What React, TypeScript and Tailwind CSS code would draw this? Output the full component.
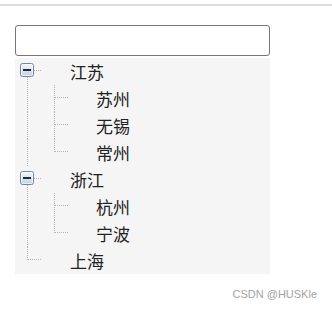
import React from "react";

type Row = { label: string; kind: "parent" | "child" | "lastChild" | "lastLeaf" };

const rows: Row[] = [
  { label: "江苏", kind: "parent" },
  { label: "苏州", kind: "child" },
  { label: "无锡", kind: "child" },
  { label: "常州", kind: "lastChild" },
  { label: "浙江", kind: "parent" },
  { label: "杭州", kind: "child" },
  { label: "宁波", kind: "lastChild" },
  { label: "上海", kind: "lastLeaf" },
];

const dot = { stroke: "#b4b4b4", strokeWidth: 1, strokeDasharray: "1 1" };

function Guides({ kind }: { kind: Row["kind"] }) {
  const isChild = kind === "child" || kind === "lastChild";
  const w = isChild ? 81 : 55;
  return (
    <svg width={w} height={27} className="shrink-0 block">
      <defs>
        <linearGradient id="boxg" x1="0" y1="0" x2="0" y2="1">
          <stop offset="0" stopColor="#f4f7fa" />
          <stop offset="1" stopColor="#c6d2df" />
        </linearGradient>
      </defs>
      {kind === "parent" && (
        <>
          <line x1={12.5} y1={19} x2={12.5} y2={27} {...dot} />
          <line x1={19} y1={12.5} x2={26} y2={12.5} {...dot} />
          <rect x={5.5} y={5.5} width={13} height={13} rx={2} fill="url(#boxg)" stroke="#7088a6" />
          <rect x={6.5} y={6.5} width={11} height={11} rx={1} fill="none" stroke="#ffffff" strokeOpacity={0.6} />
          <rect x={8} y={11} width={8} height={2} fill="#1d2b3c" />
        </>
      )}
      {isChild && (
        <>
          <line x1={12.5} y1={0} x2={12.5} y2={27} {...dot} />
          <line x1={39.5} y1={0} x2={39.5} y2={kind === "child" ? 27 : 13} {...dot} />
          <line x1={40} y1={12.5} x2={53} y2={12.5} {...dot} />
        </>
      )}
      {kind === "lastLeaf" && (
        <>
          <line x1={12.5} y1={0} x2={12.5} y2={13} {...dot} />
          <line x1={13} y1={12.5} x2={26} y2={12.5} {...dot} />
        </>
      )}
    </svg>
  );
}

export default function App() {
  return (
    <div className="relative w-[332px] h-[311px] bg-white overflow-hidden">
      <div className="mt-[4px] h-[2px] bg-[#dcdcdc]" />
      <div className="ml-[15px] mt-[19px] w-[255px] h-[31px] border border-[#767676] rounded-[3px] bg-white" />
      <div className="ml-[15px] mt-[2px] w-[255px] bg-[#f5f5f5] flex flex-col">
        {rows.map((r) => (
          <div key={r.label} className="flex items-start h-[27px]">
            <Guides kind={r.kind} />
            <span
              className="text-[17px] leading-[27px] text-[#222]"
              style={{ fontFamily: '"Noto Sans CJK SC", sans-serif' }}
            >
              {r.label}
            </span>
          </div>
        ))}
      </div>
      <div
        className="absolute right-[15px] bottom-[9px] text-[11px] text-[#a3a3a3]"
        style={{ fontFamily: '"Liberation Sans", Arial, sans-serif' }}
      >
        CSDN @HUSKle
      </div>
    </div>
  );
}
